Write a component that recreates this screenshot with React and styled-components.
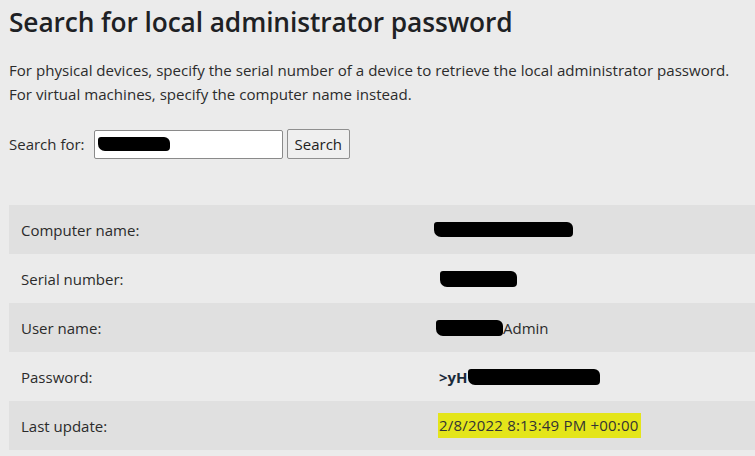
import React from 'react';
import styled, { createGlobalStyle } from 'styled-components';

const GlobalStyle = createGlobalStyle`
  html, body {
    margin: 0;
    padding: 0;
    background: #ebebeb;
    color: #222;
    font-family: "Open Sans", "Noto Sans", Arial, sans-serif;
    overflow: hidden;
  }
`;

const Page = styled.div`
  padding: 5px 0 0 9px;
`;

const Title = styled.h1`
  margin: 0 0 19px;
  font-size: 26.3px;
  font-weight: 600;
  line-height: 34px;
  color: #1e2124;
  letter-spacing: -0.1px;
`;

const Intro = styled.p`
  margin: 0 0 23px;
  font-size: 15.1px;
  line-height: 24px;
  color: #2b2b2b;
`;

const SearchForm = styled.form`
  display: flex;
  align-items: center;
  gap: 9px;
  height: 30px;
  margin-bottom: 46px;
  font-size: 15px;
  color: #2b2b2b;
`;

const InputBox = styled.div`
  position: relative;
  width: 187px;
  height: 27px;
  background: #fff;
  border: 1px solid #8a8a8a;
  border-radius: 2px;
  margin-right: -5px;
`;

const SearchButton = styled.button`
  height: 30px;
  padding: 0 7px;
  font-family: inherit;
  font-size: 15px;
  color: #1e1e1e;
  background: #efefef;
  border: 1px solid #8f8f8f;
  border-radius: 2px;
`;

const Redact = styled.span`
  display: inline-block;
  width: ${p => p.$w}px;
  height: ${p => p.$h || 15}px;
  background: #000;
  border-radius: 3px 6px 4px 7px;
  vertical-align: middle;
`;

const InputRedact = styled(Redact)`
  position: absolute;
  left: 3px;
  top: 6px;
`;

const Table = styled.div`
  display: grid;
  grid-template-columns: 427px 1fr;
  margin-right: -20px;
`;

const Row = styled.div`
  display: contents;
  & > div {
    background: ${p => (p.$shade ? '#e0e0e0' : '#ebebeb')};
  }
`;

const Cell = styled.div`
  height: 49px;
  display: flex;
  align-items: center;
  padding-left: ${p => p.$value ? '0' : '12px'};
  font-size: 15px;
  color: #2b2b2b;
`;

const Strong = styled.span`
  font-weight: 700;
  color: #1a2a3a;
`;

const Highlight = styled.span`
  background: #e4e51a;
  color: #333;
  padding: 2px 3px 3px 1px;
  margin-left: 2px;
  letter-spacing: 0.2px;
`;

const rows = [
  { label: 'Computer name:', value: <Redact $w={139} $h={15} style={{ marginLeft: -2 }} /> },
  { label: 'Serial number:', value: <Redact $w={77} $h={16} style={{ marginLeft: 4 }} /> },
  { label: 'User name:', value: <><Redact $w={67} $h={16} />Admin</> },
  { label: 'Password:', value: <><Strong style={{ marginLeft: 3 }}>&gt;yH</Strong><Redact $w={132} $h={16} /></> },
  { label: 'Last update:', value: <Highlight>2/8/2022 8:13:49 PM +00:00</Highlight> },
];

export default function App() {
  return (
    <Page>
      <GlobalStyle />
      <Title>Search for local administrator password</Title>
      <Intro>
        For physical devices, specify the serial number of a device to retrieve the local administrator password.
        <br />
        For virtual machines, specify the computer name instead.
      </Intro>
      <SearchForm onSubmit={e => e.preventDefault()}>
        <span>Search for:</span>
        <InputBox>
          <InputRedact $w={72} $h={14} />
        </InputBox>
        <SearchButton type="submit">Search</SearchButton>
      </SearchForm>
      <Table>
        {rows.map((r, i) => (
          <Row key={r.label} $shade={i % 2 === 0}>
            <Cell>{r.label}</Cell>
            <Cell $value>{r.value}</Cell>
          </Row>
        ))}
      </Table>
    </Page>
  );
}
